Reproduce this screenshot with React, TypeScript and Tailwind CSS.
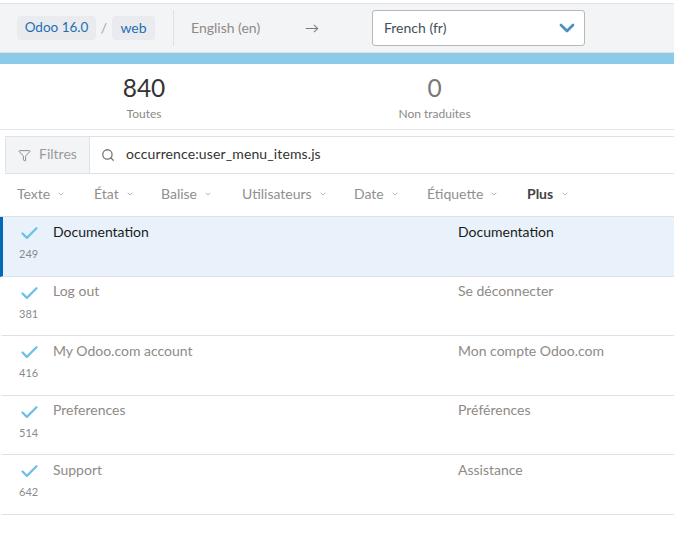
import { Check, ChevronDown, Filter, Search } from "lucide-react";

const rows = [
  { id: 249, source: "Documentation", target: "Documentation", active: true },
  { id: 381, source: "Log out", target: "Se déconnecter", active: false },
  { id: 416, source: "My Odoo.com account", target: "Mon compte Odoo.com", active: false },
  { id: 514, source: "Preferences", target: "Préférences", active: false },
  { id: 642, source: "Support", target: "Assistance", active: false },
];

const facets = [
  { label: "Texte", width: "w-[77px]" },
  { label: "État", width: "w-[67px]" },
  { label: "Balise", width: "w-[81px]" },
  { label: "Utilisateurs", width: "w-[112px]" },
  { label: "Date", width: "w-[73px]" },
  { label: "Étiquette", width: "w-[100px]" },
];

export default function App() {
  return (
    <div className="h-[552px] w-[674px] overflow-hidden bg-white pt-[3px] font-['Lato',sans-serif] text-[14px]">
      {/* header */}
      <div className="flex h-[50px] items-center border-y border-[#dfe1e8] bg-[#f3f4f6] pl-[17px]">
        <span className="flex h-6 w-[79px] items-center justify-center rounded bg-[#e9ebef] pb-[2px] text-[13.5px] text-[#1f6fb2]">Odoo 16.0</span>
        <span className="w-4 pb-[2px] text-center text-[#a8a29e]">/</span>
        <span className="flex h-6 w-[43px] items-center justify-center rounded bg-[#e9ebef] pb-[2px] text-[#1f6fb2]">web</span>
        <div className="ml-[18px] h-9 w-px bg-[#dfe1e8]" />
        <span className="ml-[17px] w-[114px] pb-[2px] text-[#8f8a86]">English (en)</span>
        <span className="w-[67px] pb-[2px] text-[#77767a]">→</span>
        <div className="flex h-9 w-[213px] items-center justify-between rounded-[3px] border border-[#b8b8b8] bg-white pl-[11px] pr-[5px] text-[#44505c]">
          <span className="pb-[2px]">French (fr)</span>
          <ChevronDown className="h-6 w-6 text-[#4a90c4]" strokeWidth={2.75} />
        </div>
      </div>
      <div className="h-[11px] bg-[#8ccaea]" />

      {/* stats */}
      <div className="flex h-[66px] border-b border-[#e3e4e8]">
        <div className="flex w-[288px] flex-col items-center pt-[8px]">
          <span className="text-[24.5px] leading-[32px] text-[#333]">840</span>
          <span className="mt-[2px] text-[12px] leading-4 text-[#8a8a8a]">Toutes</span>
        </div>
        <div className="flex w-[293px] flex-col items-center pt-[8px]">
          <span className="text-[24.5px] leading-[32px] text-[#777]">0</span>
          <span className="mt-[2px] text-[12px] leading-4 text-[#8a8a8a]">Non traduites</span>
        </div>
      </div>

      {/* search */}
      <div className="mt-[6px] ml-[5px] flex h-[38px] border-y border-[#dfe1e8]">
        <div className="flex w-[85px] items-center gap-[8px] rounded-l-[3px] border-x border-[#dfe1e8] bg-[#f3f4f6] pl-[12px] text-[#9b9b9b]">
          <Filter className="h-[13px] w-[13px] text-[#777]" strokeWidth={1.5} />
          <span className="pb-[4px]">Filtres</span>
        </div>
        <div className="flex flex-1 items-center pl-[11px] text-[#333]">
          <Search className="h-[14px] w-[14px] text-[#777]" strokeWidth={2.25} />
          <span className="ml-[11px] pb-[4px] tracking-[0.12px]">occurrence:user_menu_items.js</span>
        </div>
      </div>

      {/* facets */}
      <div className="flex h-[43px] items-center border-b border-[#dfe1e8] pb-[3px] pl-[17px]">
        {facets.map((f) => (
          <div key={f.label} className={`flex items-center gap-[7px] text-[#8f8f8f] ${f.width}`}>
            <span>{f.label}</span>
            <ChevronDown className="h-2 w-2 text-[#999]" strokeWidth={2} />
          </div>
        ))}
        <div className="flex items-center gap-[8px] font-bold text-[#444]">
          <span>Plus</span>
          <ChevronDown className="h-2 w-2 text-[#999]" strokeWidth={2} />
        </div>
      </div>

      {/* rows */}
      {rows.map((r) => (
        <div
          key={r.id}
          className={`flex h-[59.5px] border-b border-l-[3px] border-b-[#dfe1e8] ${r.active ? "border-l-[#0069b4] bg-[#e9f2fa] text-[#1a1a1a]" : "border-l-transparent text-[#8f8a86]"}`}
        >
          <div className="flex w-[50px] flex-col items-start pl-[16px] pt-[6px]">
            <Check className="h-[21px] w-[21px] text-[#6fbfe6]" strokeWidth={2.6} />
            <span className="mt-[2px] text-[11px] leading-4 text-[#8a8a8a]">{r.id}</span>
          </div>
          <div className="w-[405px] pt-[6.75px] leading-4">{r.source}</div>
          <div className="pt-[6.75px] leading-4">{r.target}</div>
        </div>
      ))}
    </div>
  );
}
